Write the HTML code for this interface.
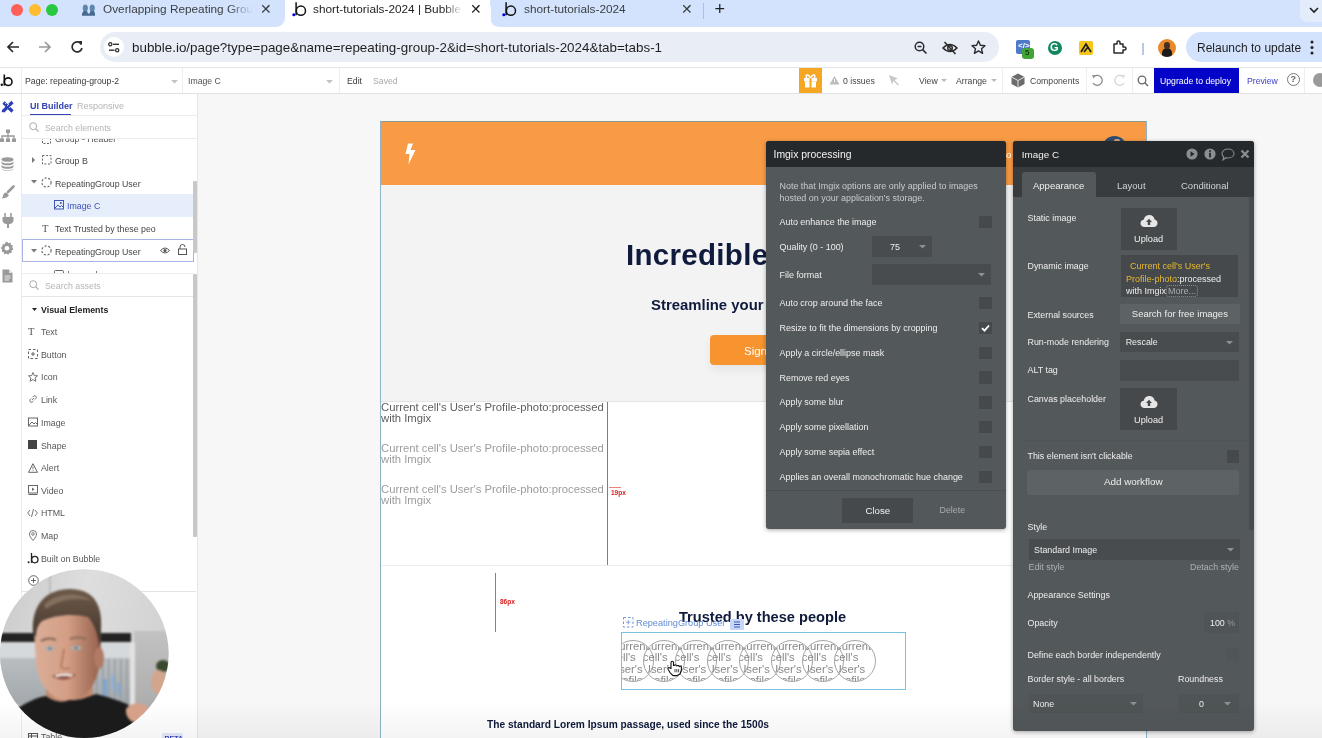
<!DOCTYPE html>
<html><head><meta charset="utf-8">
<style>
*{box-sizing:border-box;margin:0;padding:0}
html,body{width:1322px;height:738px;overflow:hidden;background:#f6f6f6;font-family:"Liberation Sans",sans-serif;position:relative;-webkit-font-smoothing:antialiased}
#root{position:absolute;left:0;top:0;width:1322px;height:738px;will-change:transform}
.a{position:absolute}
.t{position:absolute;white-space:nowrap;line-height:1}
svg{position:absolute;overflow:visible}
</style></head><body><div id="root">

<!-- ============ CHROME TAB BAR ============ -->
<div class="a" style="left:0;top:0;width:1322px;height:27px;background:#fff"></div>
<div class="a" style="left:274px;top:16px;width:227px;height:11px;background:#fff"></div><div class="a" style="left:0;top:0;width:285px;height:27px;background:#d3e3fd;border-radius:0 0 9px 0"></div><div class="a" style="left:490px;top:0;width:832px;height:27px;background:#d3e3fd;border-radius:0 0 0 9px"></div><div class="a" style="left:284.5px;top:0;width:206px;height:28px;background:#fff;border-radius:9px 9px 0 0"></div>
<div class="a" style="left:11px;top:4px;width:12px;height:12px;border-radius:50%;background:#ff5f57"></div>
<div class="a" style="left:29px;top:4px;width:12px;height:12px;border-radius:50%;background:#febc2e"></div>
<div class="a" style="left:46px;top:4px;width:12px;height:12px;border-radius:50%;background:#28c840"></div>
<svg style="left:82px;top:4px" width="14" height="12"><ellipse cx="3.3" cy="4" rx="2.6" ry="3.6" fill="#5f87ad"/><ellipse cx="10.2" cy="4" rx="2.6" ry="3.6" fill="#5f87ad"/><path d="M1.5 7 L5 7 L6 9.5 L7.5 9.5 L8.5 7 L12 7 L13 9.5 V11.8 H0 V9.5 Z" fill="#466a90"/></svg>
<div class="t" style="left:103px;top:3.5px;width:150px;overflow:hidden;font-size:11.8px;color:#3c4043;-webkit-mask-image:linear-gradient(to right,#000 125px,transparent 150px)">Overlapping Repeating Group</div>
<div class="t" style="left:260px;top:2px;font-size:14px;color:#3c4043">&#x2715;</div>
<!-- active tab -->

<svg style="left:292.8px;top:0px" width="14" height="18"><path d="M3.1 2.3 V15.3" stroke="#111" stroke-width="1.5"/><circle cx="7.9" cy="10.7" r="4.6" stroke="#111" stroke-width="1.5" fill="none"/><circle cx="0.8" cy="14.8" r="1.5" fill="#0000e0"/></svg>
<div class="t" style="left:313px;top:3.5px;width:150px;overflow:hidden;font-size:11.8px;color:#1f1f1f;-webkit-mask-image:linear-gradient(to right,#000 130px,transparent 150px)">short-tutorials-2024 | Bubble</div>
<div class="t" style="left:470px;top:2px;font-size:14px;color:#1f1f1f">&#x2715;</div>
<!-- third tab -->
<svg style="left:503px;top:0px" width="14" height="18"><path d="M3.1 2.3 V15.3" stroke="#111" stroke-width="1.5"/><circle cx="7.9" cy="10.7" r="4.6" stroke="#111" stroke-width="1.5" fill="none"/><circle cx="0.8" cy="14.8" r="1.5" fill="#0000e0"/></svg>
<div class="t" style="left:524px;top:3.5px;font-size:11.8px;color:#3c4043">short-tutorials-2024</div>
<div class="t" style="left:681px;top:2px;font-size:14px;color:#3c4043">&#x2715;</div>
<div class="a" style="left:703px;top:3px;width:1px;height:16px;background:#a8c0e8"></div>
<div class="t" style="left:714.5px;top:0px;font-size:18px;color:#1f1f1f">+</div>
<div class="a" style="left:1300px;top:0;width:22px;height:22px;background:#e3ecfb;border-radius:0 0 0 7px"></div>
<svg style="left:1309px;top:7px" width="10" height="6"><path d="M1 1 L5 5 L9 1" stroke="#1f1f1f" stroke-width="1.6" fill="none"/></svg>

<!-- ============ ADDRESS ROW ============ -->
<div class="a" style="left:0;top:27px;width:1322px;height:41px;background:#fff"></div>
<svg style="left:6px;top:40px" width="14" height="14"><path d="M13 7 H2 M7 2 L2 7 L7 12" stroke="#2b2b2b" stroke-width="1.7" fill="none"/></svg>
<svg style="left:38px;top:40px" width="14" height="14"><path d="M1 7 H12 M7 2 L12 7 L7 12" stroke="#9a9a9a" stroke-width="1.7" fill="none"/></svg>
<svg style="left:70px;top:40px" width="14" height="14"><path d="M11.5 4.5 A5 5 0 1 0 12 8" stroke="#2b2b2b" stroke-width="1.7" fill="none"/><path d="M8.5 1 L12 1 L12 4.6 Z" fill="#2b2b2b"/></svg>
<div class="a" style="left:100px;top:32px;width:899px;height:30px;border-radius:15px;background:#e9edf6"></div>
<div class="a" style="left:104px;top:37px;width:20px;height:20px;border-radius:50%;background:#fff"></div>
<svg style="left:108px;top:42px" width="12" height="11"><circle cx="2.3" cy="2.3" r="1.6" stroke="#333" stroke-width="1.3" fill="none"/><path d="M5 2.3 H11" stroke="#333" stroke-width="1.4"/><circle cx="9.2" cy="8.2" r="1.6" stroke="#333" stroke-width="1.3" fill="none"/><path d="M1 8.2 H6.5" stroke="#333" stroke-width="1.4"/></svg>
<div class="t" style="left:132px;top:40.7px;font-size:13.4px;color:#1f1f1f">bubble.io/page?type=page&amp;name=repeating-group-2&amp;id=short-tutorials-2024&amp;tab=tabs-1</div>
<svg style="left:914px;top:41px" width="14" height="14"><circle cx="5.5" cy="5.5" r="4.3" stroke="#2b2b2b" stroke-width="1.5" fill="none"/><path d="M3.5 5.5 H7.5 M8.6 8.6 L12.5 12.5" stroke="#2b2b2b" stroke-width="1.6"/></svg>
<svg style="left:942px;top:41px" width="16" height="14"><path d="M1 7 Q8 0 15 7 Q8 14 1 7 Z" stroke="#2b2b2b" stroke-width="1.5" fill="none"/><circle cx="8" cy="7" r="2.3" stroke="#2b2b2b" stroke-width="1.4" fill="none"/><path d="M2.5 1 L13.5 13" stroke="#2b2b2b" stroke-width="1.6"/></svg>
<svg style="left:971px;top:40px" width="15" height="15"><path d="M7.5 1 L9.4 5.3 L14 5.7 L10.5 8.7 L11.6 13.3 L7.5 10.9 L3.4 13.3 L4.5 8.7 L1 5.7 L5.6 5.3 Z" stroke="#2b2b2b" stroke-width="1.4" fill="none" stroke-linejoin="round"/></svg>
<!-- extensions -->
<div class="a" style="left:1016px;top:40px;width:14px;height:14px;background:#4d79c7;border-radius:2px"></div>
<div class="t" style="left:1018px;top:42px;font-size:8px;color:#fff;font-weight:700">&lt;/&gt;</div>
<div class="a" style="left:1022px;top:48px;width:12px;height:11px;background:#3fa535;border-radius:3px"></div>
<div class="t" style="left:1025px;top:49px;font-size:8px;color:#111">5</div>
<div class="a" style="left:1048px;top:41px;width:14px;height:14px;border-radius:50%;background:#12875e"></div>
<div class="t" style="left:1050px;top:42px;font-size:11px;color:#fff;font-weight:700">G</div>
<div class="a" style="left:1079px;top:41px;width:14px;height:14px;background:#f5c518;border-radius:2px"></div>
<svg style="left:1080px;top:43px" width="12" height="10"><path d="M1 9 L6 1 L11 9 M4 9 L8 4" stroke="#1a1a1a" stroke-width="1.6" fill="none"/></svg>
<svg style="left:1111px;top:40px" width="16" height="16"><path d="M3 4 H6 V2.5 A1.5 1.5 0 0 1 9 2.5 V4 H12 V7 H13.5 A1.5 1.5 0 0 1 13.5 10 H12 V13 H3 Z" stroke="#2b2b2b" stroke-width="1.5" fill="none" stroke-linejoin="round"/></svg>
<div class="a" style="left:1142px;top:43px;width:1.5px;height:12px;background:#b8c8e8"></div>
<div class="a" style="left:1158px;top:39px;width:18px;height:18px;border-radius:50%;background:#e88a2c;overflow:hidden"><div class="a" style="left:4px;top:9px;width:10px;height:10px;border-radius:5px 5px 0 0;background:#1a1a1a"></div><div class="a" style="left:6px;top:3px;width:6px;height:7px;border-radius:3px;background:#4a3020"></div></div>
<div class="a" style="left:1186px;top:32px;width:150px;height:30px;border-radius:15px;background:#d3e3fd"></div>
<div class="t" style="left:1197px;top:41.5px;font-size:12px;color:#1f1f1f">Relaunch to update</div>
<svg style="left:1310px;top:40px" width="4" height="15"><circle cx="2" cy="2" r="1.5" fill="#1f1f1f"/><circle cx="2" cy="7.5" r="1.5" fill="#1f1f1f"/><circle cx="2" cy="13" r="1.5" fill="#1f1f1f"/></svg>

<!-- ============ BUBBLE TOOLBAR ============ -->
<div class="a" style="left:0;top:67px;width:1322px;height:27px;background:#fff;border-top:1px solid #e6e6e6;border-bottom:1px solid #e2e2e2"></div>
<svg style="left:0px;top:72px" width="14" height="16"><path d="M4.3 2.5 V13.6" stroke="#111" stroke-width="1.6"/><circle cx="8.2" cy="9.7" r="3.8" stroke="#111" stroke-width="1.6" fill="none"/><circle cx="1.8" cy="12.7" r="1.2" fill="#111"/></svg>
<div class="a" style="left:21px;top:68px;width:1px;height:25px;background:#eee"></div>
<div class="t" style="left:25px;top:77px;font-size:8.7px;color:#3b3b3b">Page: repeating-group-2</div>
<svg style="left:170.5px;top:80px" width="7" height="4"><path d="M0 0 H7 L3.5 3.5 Z" fill="#c2c2c2"/></svg>
<div class="a" style="left:182px;top:68px;width:1px;height:25px;background:#eee"></div>
<div class="t" style="left:188px;top:77px;font-size:8.7px;color:#555">Image C</div>
<svg style="left:325.5px;top:80px" width="7" height="4"><path d="M0 0 H7 L3.5 3.5 Z" fill="#c2c2c2"/></svg>
<div class="a" style="left:339px;top:68px;width:1px;height:25px;background:#eee"></div>
<div class="t" style="left:347px;top:77px;font-size:8.7px;color:#3b3b3b">Edit</div>
<div class="t" style="left:373px;top:77px;font-size:8.7px;color:#a8a8a8">Saved</div>
<!-- right toolbar -->
<div class="a" style="left:799px;top:68px;width:23px;height:25px;background:#f5a623"></div>
<svg style="left:803px;top:73px" width="15" height="15"><rect x="1" y="5" width="13" height="3.5" fill="#fff"/><rect x="2" y="8.5" width="11" height="6" fill="#fff"/><rect x="6.5" y="5" width="2" height="10" fill="#f5a623"/><path d="M7.5 5 C5 0 1.5 2 4 5 M7.5 5 C10 0 13.5 2 11 5" stroke="#fff" stroke-width="1.5" fill="none"/></svg>
<svg style="left:829px;top:75px" width="11" height="10"><path d="M5.5 1 L10.5 9.5 H0.5 Z" fill="#bbb"/><rect x="5" y="4" width="1" height="3" fill="#fff"/></svg>
<div class="t" style="left:843px;top:77px;font-size:8.7px;color:#444">0 issues</div>
<svg style="left:888px;top:74px" width="12" height="12"><path d="M1 1 L10 4.5 L6.5 6 L11 10.5 L10 11.5 L5.5 7 L4 10.5 Z" fill="#c8c8c8"/></svg>
<div class="t" style="left:919px;top:77px;font-size:8.7px;color:#444">View</div>
<svg style="left:941px;top:79px" width="6" height="3"><path d="M0 0 H6 L3 3 Z" fill="#bbb"/></svg>
<div class="t" style="left:956px;top:77px;font-size:8.7px;color:#444">Arrange</div>
<svg style="left:991px;top:79px" width="6" height="3"><path d="M0 0 H6 L3 3 Z" fill="#bbb"/></svg>
<div class="a" style="left:1002px;top:68px;width:1px;height:25px;background:#eee"></div>
<svg style="left:1011px;top:73px" width="14" height="15"><path d="M7 0.5 L13.5 4 V11 L7 14.5 L0.5 11 V4 Z" fill="#6b6b6b"/><path d="M0.5 4 L7 7.5 L13.5 4 M7 7.5 V14.5" stroke="#fff" stroke-width="0.8" fill="none"/></svg>
<div class="t" style="left:1030px;top:77px;font-size:8.7px;color:#444">Components</div>
<div class="a" style="left:1086px;top:68px;width:1px;height:25px;background:#eee"></div>
<svg style="left:1091px;top:74px" width="12" height="12"><path d="M3 2.5 A5 5 0 1 1 2 9" stroke="#888" stroke-width="1.3" fill="none"/><path d="M1 1 L4.5 1.5 L2.5 4.5 Z" fill="#888"/></svg>
<svg style="left:1114px;top:74px" width="12" height="12"><path d="M9 2.5 A5 5 0 1 0 10 9" stroke="#d5d5d5" stroke-width="1.3" fill="none"/><path d="M11 1 L7.5 1.5 L9.5 4.5 Z" fill="#d5d5d5"/></svg>
<div class="a" style="left:1132px;top:68px;width:1px;height:25px;background:#eee"></div>
<svg style="left:1137px;top:75px" width="12" height="12"><circle cx="5" cy="5" r="3.8" stroke="#666" stroke-width="1.3" fill="none"/><path d="M7.8 7.8 L11 11" stroke="#666" stroke-width="1.4"/></svg>
<div class="a" style="left:1154px;top:68px;width:85px;height:25px;background:#0404c8"></div>
<div class="t" style="left:1160px;top:77px;font-size:8.7px;color:#fff">Upgrade to deploy</div>
<div class="t" style="left:1247px;top:77px;font-size:8.7px;color:#3b3bd0">Preview</div>
<div class="a" style="left:1287px;top:73px;width:13px;height:13px;border-radius:50%;border:1.2px solid #777"></div>
<div class="t" style="left:1290.5px;top:75px;font-size:9px;color:#666;font-weight:700">?</div>
<div class="a" style="left:1304px;top:68px;width:1px;height:25px;background:#eee"></div>
<div class="a" style="left:1313px;top:73px;width:14px;height:14px;border-radius:50%;background:#9a9a9a"></div>



<!-- ============ CANVAS ============ -->
<div class="a" style="left:198px;top:94px;width:1124px;height:644px;background:#f7f7f7"></div>
<div class="a" style="left:380px;top:121px;width:767px;height:617px;background:#fff;border:1px solid #8eb3c9;border-bottom:none"></div>
<div class="a" style="left:381px;top:121px;width:765px;height:64px;background:#f99b45;border-top:1px solid #8f9a8f"></div>
<svg style="left:403px;top:143px" width="13" height="22"><path d="M5 0.5 L10 0.5 L7.5 7 L12.5 7 L5.5 21.5 L6.5 11 L2.5 11 Z" fill="#fff"/></svg>
<div class="a" style="left:1102px;top:136px;width:25px;height:25px;border-radius:50%;background:#2f4d70"></div>
<div class="a" style="left:1114px;top:139px;width:6px;height:4px;border-radius:3px;background:#d9a38a"></div>
<div class="a" style="left:381px;top:185px;width:765px;height:216px;background:#f3f3f4"></div>
<div class="t" style="left:626px;top:240px;font-size:29.5px;font-weight:700;color:#0f1a3c;letter-spacing:0.3px">Incredible</div>
<div class="t" style="left:651px;top:297.5px;font-size:14.9px;font-weight:700;color:#0f1a3c">Streamline your</div>
<div class="a" style="left:710px;top:335px;width:80px;height:30px;background:#f7942f;border-radius:4px;box-shadow:0 5px 10px rgba(0,0,0,0.06)"></div>
<div class="t" style="left:744px;top:345.5px;font-size:11.5px;color:#fff">Sign</div>
<div class="a" style="left:381px;top:401px;width:765px;height:1px;background:#e4e4e4"></div>
<div class="a" style="left:381px;top:565px;width:765px;height:1px;background:#ececec"></div>
<!-- repeating group list -->
<div class="a" style="left:381px;top:402px;width:227px;height:163px;border-right:1.5px solid #a0765a"></div>
<div class="t" style="left:381px;top:402px;font-size:11.3px;line-height:11px;color:#5e5e5e;white-space:normal;width:230px">Current cell's User's Profile-photo:processed<br>with Imgix</div>
<div class="t" style="left:381px;top:443px;font-size:11.3px;line-height:11px;color:#9d9d9d;white-space:normal;width:230px">Current cell's User's Profile-photo:processed<br>with Imgix</div>
<div class="t" style="left:381px;top:484px;font-size:11.3px;line-height:11px;color:#9d9d9d;white-space:normal;width:230px">Current cell's User's Profile-photo:processed<br>with Imgix</div>
<div class="a" style="left:609px;top:487px;width:12px;height:1px;background:#f08080"></div>
<div class="t" style="left:611px;top:490px;font-size:6.5px;font-weight:700;color:#d81b1b">19px</div>
<div class="a" style="left:495px;top:573px;width:1px;height:59px;background:#f05555"></div>
<div class="t" style="left:500px;top:598.5px;font-size:6.5px;font-weight:700;color:#d81b1b">86px</div>
<!-- trusted section -->
<div class="t" style="left:679px;top:610px;font-size:14.6px;font-weight:700;color:#0f1a3c">Trusted by these people</div>
<svg style="left:623px;top:617px" width="11" height="11"><rect x="0.5" y="0.5" width="9.5" height="9.5" stroke="#6e95d8" stroke-width="1" stroke-dasharray="2.5 2" fill="none"/><path d="M5.25 3 V7.5 M3 5.25 H7.5" stroke="#6e95d8" stroke-width="0.8"/></svg>
<div class="t" style="left:636px;top:619px;font-size:9.2px;color:#4d7ed0;opacity:0.9">RepeatingGroup User</div>
<div class="a" style="left:730px;top:619px;width:14px;height:11px;background:#c6d8f6"></div>
<svg style="left:734px;top:621px" width="6" height="7"><path d="M0 1 H6 M0 3.5 H6 M0 6 H6" stroke="#3a55c0" stroke-width="1"/></svg>
<div class="a" style="left:621px;top:632px;width:285px;height:58px;border:1px solid #7cc0e4"></div>
<div class="a" style="left:622px;top:633px;width:283px;height:56px;overflow:hidden"><div class="a" style="left:-622px;top:-633px;width:1322px;height:738px"><div class="a" style="left:611.5px;top:640px;width:42px;height:42px;border-radius:50%;border:1px solid #a6a6a6;overflow:hidden"><div class="t" style="left:-1.5px;top:0px;width:46px;white-space:normal;font-size:11.3px;line-height:11.3px;color:#888">Current cell's User's Profile-photo</div></div>
<div class="a" style="left:643.3px;top:640px;width:42px;height:42px;border-radius:50%;border:1px solid #a6a6a6;overflow:hidden"><div class="t" style="left:-1.5px;top:0px;width:46px;white-space:normal;font-size:11.3px;line-height:11.3px;color:#888">Current cell's User's Profile-photo</div></div>
<div class="a" style="left:675.1px;top:640px;width:42px;height:42px;border-radius:50%;border:1px solid #a6a6a6;overflow:hidden"><div class="t" style="left:-1.5px;top:0px;width:46px;white-space:normal;font-size:11.3px;line-height:11.3px;color:#888">Current cell's User's Profile-photo</div></div>
<div class="a" style="left:706.9px;top:640px;width:42px;height:42px;border-radius:50%;border:1px solid #a6a6a6;overflow:hidden"><div class="t" style="left:-1.5px;top:0px;width:46px;white-space:normal;font-size:11.3px;line-height:11.3px;color:#888">Current cell's User's Profile-photo</div></div>
<div class="a" style="left:738.7px;top:640px;width:42px;height:42px;border-radius:50%;border:1px solid #a6a6a6;overflow:hidden"><div class="t" style="left:-1.5px;top:0px;width:46px;white-space:normal;font-size:11.3px;line-height:11.3px;color:#888">Current cell's User's Profile-photo</div></div>
<div class="a" style="left:770.5px;top:640px;width:42px;height:42px;border-radius:50%;border:1px solid #a6a6a6;overflow:hidden"><div class="t" style="left:-1.5px;top:0px;width:46px;white-space:normal;font-size:11.3px;line-height:11.3px;color:#888">Current cell's User's Profile-photo</div></div>
<div class="a" style="left:802.3px;top:640px;width:42px;height:42px;border-radius:50%;border:1px solid #a6a6a6;overflow:hidden"><div class="t" style="left:-1.5px;top:0px;width:46px;white-space:normal;font-size:11.3px;line-height:11.3px;color:#888">Current cell's User's Profile-photo</div></div>
<div class="a" style="left:834.1px;top:640px;width:42px;height:42px;border-radius:50%;border:1px solid #a6a6a6;overflow:hidden"><div class="t" style="left:-1.5px;top:0px;width:46px;white-space:normal;font-size:11.3px;line-height:11.3px;color:#888">Current cell's User's Profile-photo</div></div>
</div></div>
<svg style="left:666px;top:660px" width="17" height="17"><path d="M6.2 1.3 C5.4 1.3 5 1.9 5 2.6 V8.6 L3.4 7.8 C2.5 7.4 1.5 8.2 2 9.2 L4.2 12.8 L7 15.6 H11.2 L14 14 L15.4 10 V7.2 C15.4 6.2 14 5.8 13.2 6.6 C13 5.5 11.5 5 10.8 6 C10.5 4.8 9 4.6 8.4 5.4 H7.5 V2.6 C7.5 1.9 7 1.3 6.2 1.3 Z" fill="#fff" stroke="#111" stroke-width="1.1" stroke-linejoin="round"/><path d="M9 9 V12.3 M10.8 9 V12.3 M12.6 9 V12.3" stroke="#222" stroke-width="0.8"/></svg>
<div class="t" style="left:487px;top:720px;font-size:10.2px;font-weight:700;color:#0f1a3c">The standard Lorem Ipsum passage, used since the 1500s</div>


<!-- ============ PANELS ============ -->
<div class="a" style="left:765.5px;top:140.5px;width:240.5px;height:388.5px;background:#53585a;border-radius:3px;box-shadow:0 1px 4px rgba(0,0,0,0.35)"></div>
<div class="a" style="left:765.5px;top:140.5px;width:240.5px;height:26.5px;background:#25292b;border-radius:3px 3px 0 0"></div>
<div class="t" style="left:773.5px;top:149.5px;font-size:10.4px;color:#f2f2f2;">Imgix processing</div>
<div class="t" style="left:779.5px;top:181.8px;font-size:8.95px;color:#c9cbcc;">Note that Imgix options are only applied to images</div>
<div class="t" style="left:779.5px;top:194.1px;font-size:8.95px;color:#c9cbcc;">hosted on your application's storage.</div>
<div class="t" style="left:779.5px;top:217.8px;font-size:8.95px;color:#eeeeee;">Auto enhance the image</div>
<div class="a" style="left:979px;top:215.5px;width:12.5px;height:12.5px;background:#46494b;"></div>
<div class="t" style="left:779.5px;top:242.5px;font-size:8.95px;color:#eeeeee;">Quality (0 - 100)</div>
<div class="t" style="left:779.5px;top:270.7px;font-size:8.95px;color:#eeeeee;">File format</div>
<div class="t" style="left:779.5px;top:298.9px;font-size:8.95px;color:#eeeeee;">Auto crop around the face</div>
<div class="a" style="left:979px;top:296.6px;width:12.5px;height:12.5px;background:#46494b;"></div>
<div class="t" style="left:779.5px;top:324.1px;font-size:8.95px;color:#eeeeee;">Resize to fit the dimensions by cropping</div>
<div class="a" style="left:979px;top:321.8px;width:12.5px;height:12.5px;background:#46494b;"></div>
<svg style="left:981px;top:323.8px" width="9" height="8"><path d="M1 4.2 L3.5 6.7 L8 1.5" stroke="#fff" stroke-width="1.8" fill="none"/></svg>
<div class="t" style="left:779.5px;top:349.0px;font-size:8.95px;color:#eeeeee;">Apply a circle/ellipse mask</div>
<div class="a" style="left:979px;top:346.7px;width:12.5px;height:12.5px;background:#46494b;"></div>
<div class="t" style="left:779.5px;top:373.6px;font-size:8.95px;color:#eeeeee;">Remove red eyes</div>
<div class="a" style="left:979px;top:371.3px;width:12.5px;height:12.5px;background:#46494b;"></div>
<div class="t" style="left:779.5px;top:398.3px;font-size:8.95px;color:#eeeeee;">Apply some blur</div>
<div class="a" style="left:979px;top:396px;width:12.5px;height:12.5px;background:#46494b;"></div>
<div class="t" style="left:779.5px;top:423.2px;font-size:8.95px;color:#eeeeee;">Apply some pixellation</div>
<div class="a" style="left:979px;top:420.9px;width:12.5px;height:12.5px;background:#46494b;"></div>
<div class="t" style="left:779.5px;top:448.1px;font-size:8.95px;color:#eeeeee;">Apply some sepia effect</div>
<div class="a" style="left:979px;top:445.8px;width:12.5px;height:12.5px;background:#46494b;"></div>
<div class="t" style="left:779.5px;top:473.1px;font-size:8.95px;color:#eeeeee;">Applies an overall monochromatic hue change</div>
<div class="a" style="left:979px;top:470.8px;width:12.5px;height:12.5px;background:#46494b;"></div>
<div class="a" style="left:872.3px;top:236px;width:60.1px;height:20.5px;background:#484c4e;"></div>
<div class="t" style="left:890px;top:242.5px;font-size:8.95px;color:#eeeeee;">75</div>
<svg style="left:918.5px;top:244.7px" width="7" height="4"><path d="M0 0 H7 L3.5 3.5 Z" fill="#8d9193"/></svg>
<div class="a" style="left:872.3px;top:264px;width:118.7px;height:20.8px;background:#484c4e;"></div>
<svg style="left:977.5px;top:272.9px" width="7" height="4"><path d="M0 0 H7 L3.5 3.5 Z" fill="#8d9193"/></svg>
<div class="a" style="left:765.5px;top:490px;width:240.5px;height:1.0px;background:#4a4e50;"></div>
<div class="a" style="left:842px;top:498px;width:70.7px;height:24.6px;background:#46494b;"></div>
<div class="t" style="left:865.4px;top:505.9px;font-size:9.7px;color:#f2f2f2;">Close</div>
<div class="t" style="left:939.5px;top:506.3px;font-size:8.9px;color:#a9acae;">Delete</div>
<div class="a" style="left:1013px;top:140.5px;width:241.0px;height:590.2px;background:#53585a;border-radius:3px;box-shadow:0 1px 4px rgba(0,0,0,0.35)"></div>
<div class="a" style="left:1013px;top:140.5px;width:241.0px;height:26.8px;background:#25292b;border-radius:3px 3px 0 0"></div>
<div class="a" style="left:1013px;top:167.3px;width:241.0px;height:29.7px;background:#383c3e;"></div>
<div class="a" style="left:1021.7px;top:172.4px;width:74.0px;height:25.1px;background:#53585a;border-radius:3px 3px 0 0"></div>
<div class="t" style="left:1021.7px;top:149.5px;font-size:9.9px;color:#f2f2f2;">Image C</div>
<div class="t" style="left:1006px;top:150.0px;font-size:9.5px;color:#fff;">o</div>
<svg style="left:1186px;top:148px" width="12" height="12"><circle cx="6" cy="6" r="5.6" fill="#8a8e90"/><path d="M4.5 3.3 L8.6 6 L4.5 8.7 Z" fill="#25292b"/></svg>
<svg style="left:1203.5px;top:148px" width="12" height="12"><circle cx="6" cy="6" r="5.6" fill="#8a8e90"/><rect x="5.1" y="4.8" width="1.8" height="4.6" fill="#25292b"/><circle cx="6" cy="3.1" r="1" fill="#25292b"/></svg>
<svg style="left:1220.5px;top:148px" width="14" height="13"><path d="M7 1 C10.5 1 13 3 13 5.5 C13 8 10.5 10 7 10 C6.3 10 5.6 9.9 5 9.7 L2 11.8 L2.8 9 C1.6 8.2 1 7 1 5.5 C1 3 3.5 1 7 1 Z" stroke="#8a8e90" stroke-width="1.1" fill="none"/></svg>
<svg style="left:1240px;top:149px" width="10" height="10"><path d="M1.5 1.5 L8.5 8.5 M8.5 1.5 L1.5 8.5" stroke="#8a8e90" stroke-width="2.3"/></svg>
<div class="t" style="left:1033px;top:180.5px;font-size:9.5px;color:#f0f0f0;">Appearance</div>
<div class="t" style="left:1117px;top:180.5px;font-size:9.5px;color:#d0d2d3;">Layout</div>
<div class="t" style="left:1181px;top:180.5px;font-size:9.5px;color:#d0d2d3;">Conditional</div>
<div class="a" style="left:1249.3px;top:197px;width:4.7px;height:333.0px;background:#474b4d;"></div>
<div class="t" style="left:1027.5px;top:214.3px;font-size:8.9px;color:#eeeeee;">Static image</div>
<div class="t" style="left:1027.5px;top:261.8px;font-size:8.9px;color:#eeeeee;">Dynamic image</div>
<div class="t" style="left:1027.5px;top:310.6px;font-size:8.9px;color:#eeeeee;">External sources</div>
<div class="t" style="left:1027.5px;top:338.3px;font-size:8.9px;color:#eeeeee;">Run-mode rendering</div>
<div class="t" style="left:1027.5px;top:366.3px;font-size:8.9px;color:#eeeeee;">ALT tag</div>
<div class="t" style="left:1027.5px;top:394.8px;font-size:8.9px;color:#eeeeee;">Canvas placeholder</div>
<div class="t" style="left:1027.5px;top:452.0px;font-size:8.9px;color:#eeeeee;">This element isn't clickable</div>
<div class="t" style="left:1027.5px;top:523.3px;font-size:8.9px;color:#eeeeee;">Style</div>
<div class="t" style="left:1027.5px;top:591.3px;font-size:8.9px;color:#eeeeee;">Appearance Settings</div>
<div class="t" style="left:1027.5px;top:618.7px;font-size:8.9px;color:#eeeeee;">Opacity</div>
<div class="t" style="left:1027.5px;top:650.6px;font-size:8.9px;color:#eeeeee;">Define each border independently</div>
<div class="t" style="left:1027.5px;top:674.9px;font-size:8.9px;color:#eeeeee;">Border style - all borders</div>
<div class="a" style="left:1120.6px;top:207.6px;width:56.4px;height:42.4px;background:#46494b;"></div>
<svg style="left:1139.5px;top:214px" width="18" height="14"><path d="M4.5 13 C2 13 0.5 11.3 0.5 9.3 C0.5 7.4 1.9 6 3.7 5.8 C4.2 3 6.5 1 9.3 1 C12.1 1 14.3 3 14.6 5.6 C16.4 5.9 17.5 7.4 17.5 9.3 C17.5 11.3 16 13 13.8 13 Z" fill="#e6e6e6"/><path d="M9 4.8 L12 8 H10.2 V11 H7.8 V8 H6 Z" fill="#46494b"/></svg>
<div class="t" style="left:1134px;top:234.9px;font-size:9.2px;color:#f0f0f0;">Upload</div>
<div class="a" style="left:1120.6px;top:255px;width:117.9px;height:42.0px;background:#46494b;"></div>
<div class="t" style="left:1130px;top:261.8px;font-size:9.0px;color:#e6b830;">Current cell's User's</div>
<div class="t" style="left:1126px;top:274.6px;font-size:9.0px;color:#eeeeee;"><span style="color:#e6b830">Profile-photo</span>:processed</div>
<div class="t" style="left:1126px;top:286.8px;font-size:9.0px;color:#eeeeee;">with Imgix<span style="color:#a9acae;border:1px dotted #8a8e90;border-radius:3px;padding:0 1px">More...</span></div>
<div class="a" style="left:1120px;top:303.7px;width:120.0px;height:20.3px;background:#5d6264;border-radius:1px"></div>
<div class="t" style="left:1131.8px;top:309.1px;font-size:9.5px;color:#eeeeee;">Search for free images</div>
<div class="a" style="left:1120.3px;top:331.6px;width:118.6px;height:20.7px;background:#484c4e;"></div>
<div class="t" style="left:1125.7px;top:338.3px;font-size:8.9px;color:#eeeeee;">Rescale</div>
<svg style="left:1225.5px;top:340.5px" width="7" height="4"><path d="M0 0 H7 L3.5 3.5 Z" fill="#8d9193"/></svg>
<div class="a" style="left:1120.3px;top:360px;width:118.6px;height:20.7px;background:#484c4e;"></div>
<div class="a" style="left:1120.3px;top:388.3px;width:56.4px;height:41.7px;background:#46494b;"></div>
<svg style="left:1139.5px;top:395px" width="18" height="14"><path d="M4.5 13 C2 13 0.5 11.3 0.5 9.3 C0.5 7.4 1.9 6 3.7 5.8 C4.2 3 6.5 1 9.3 1 C12.1 1 14.3 3 14.6 5.6 C16.4 5.9 17.5 7.4 17.5 9.3 C17.5 11.3 16 13 13.8 13 Z" fill="#e6e6e6"/><path d="M9 4.8 L12 8 H10.2 V11 H7.8 V8 H6 Z" fill="#46494b"/></svg>
<div class="t" style="left:1134px;top:415.7px;font-size:9.2px;color:#f0f0f0;">Upload</div>
<div class="a" style="left:1021px;top:440px;width:228.0px;height:1.0px;background:#505457;"></div>
<div class="a" style="left:1227px;top:450px;width:12.0px;height:13.0px;background:#46494b;"></div>
<div class="a" style="left:1027px;top:470.2px;width:212.0px;height:24.6px;background:#5d6264;border-radius:2px"></div>
<div class="t" style="left:1103.9px;top:477.3px;font-size:9.9px;color:#eeeeee;">Add workflow</div>
<div class="a" style="left:1029px;top:539px;width:210.8px;height:21.0px;background:#484c4e;"></div>
<div class="t" style="left:1034px;top:545.8px;font-size:8.9px;color:#eeeeee;">Standard Image</div>
<svg style="left:1226.5px;top:548.0px" width="7" height="4"><path d="M0 0 H7 L3.5 3.5 Z" fill="#8d9193"/></svg>
<div class="t" style="left:1028.5px;top:562.8px;font-size:8.9px;color:#aeb1b2;">Edit style</div>
<div class="t" style="left:1190px;top:562.8px;font-size:8.9px;color:#aeb1b2;">Detach style</div>
<div class="a" style="left:1204px;top:612px;width:35.0px;height:21.0px;background:#4f5456;"></div>
<div class="t" style="left:1210px;top:618.7px;font-size:8.9px;color:#eeeeee;">100 <span style="color:#9a9d9f">%</span></div>
<div class="a" style="left:1226px;top:648px;width:13.0px;height:13.0px;background:#505557;"></div>
<div class="t" style="left:1178px;top:674.9px;font-size:8.9px;color:#eeeeee;">Roundness</div>
<div class="a" style="left:1029px;top:693.8px;width:114.0px;height:19.2px;background:#4f5456;"></div>
<div class="t" style="left:1033px;top:699.7px;font-size:8.9px;color:#eeeeee;">None</div>
<svg style="left:1129.5px;top:701.9px" width="7" height="4"><path d="M0 0 H7 L3.5 3.5 Z" fill="#8d9193"/></svg>
<div class="a" style="left:1178px;top:693.8px;width:61.0px;height:19.2px;background:#4f5456;"></div>
<div class="t" style="left:1199px;top:699.7px;font-size:8.9px;color:#eeeeee;">0</div>
<svg style="left:1223.5px;top:701.9px" width="7" height="4"><path d="M0 0 H7 L3.5 3.5 Z" fill="#8d9193"/></svg>

<!-- ============ LEFT ICON COLUMN ============ -->
<div class="a" style="left:0;top:94px;width:22px;height:644px;background:#fff;border-right:1px solid #ededed"></div>
<svg style="left:1px;top:100px" width="14" height="13"><path d="M2 11.5 L11.5 2" stroke="#2d3fb5" stroke-width="3.2"/><path d="M2.5 2.5 L11.5 11.5" stroke="#2d3fb5" stroke-width="3.2"/><path d="M4 4 L6 2 M6 6 L8 4 M8 8 L10 6" stroke="#fff" stroke-width="0.8"/><path d="M0.5 12.5 L1.5 9.5 L3.5 11.5 Z" fill="#2d3fb5"/></svg>
<svg style="left:-0.5px;top:129px" width="16" height="13"><rect x="6" y="0.5" width="4" height="3.5" fill="#9a9a9a"/><path d="M8 4 V7 M2 10 V7 H14 V10 M8 7 V10" stroke="#9a9a9a" stroke-width="1.3" fill="none"/><rect x="0" y="9.5" width="4" height="3.5" fill="#9a9a9a"/><rect x="6" y="9.5" width="4" height="3.5" fill="#9a9a9a"/><rect x="12" y="9.5" width="4" height="3.5" fill="#9a9a9a"/></svg>
<svg style="left:0.5px;top:157px" width="13" height="14"><ellipse cx="6.5" cy="2.5" rx="6" ry="2.3" fill="#9a9a9a"/><path d="M0.5 4 V6 A6 2.3 0 0 0 12.5 6 V4 A6 2.3 0 0 1 0.5 4 Z M0.5 7.5 V9.5 A6 2.3 0 0 0 12.5 9.5 V7.5 A6 2.3 0 0 1 0.5 7.5 Z M0.5 11 V11.5 A6 2.3 0 0 0 12.5 11.5 V11 A6 2.3 0 0 1 0.5 11 Z" fill="#9a9a9a"/></svg>
<svg style="left:1px;top:185px" width="14" height="14"><path d="M12.5 1.5 L7 7" stroke="#9a9a9a" stroke-width="2.6" stroke-linecap="round"/><path d="M5.5 7.5 C3 7.5 2 9.5 2 11 C2 12 1.2 12.8 0.5 13 C3.5 13.8 7.5 12.5 7.8 10 Z" fill="#9a9a9a"/></svg>
<svg style="left:1.5px;top:213px" width="12" height="15"><path d="M3 0 V4 M9 0 V4" stroke="#9a9a9a" stroke-width="1.6"/><path d="M0.5 4 H11.5 V7 C11.5 10 9 11 7 11 V15 H5 V11 C3 11 0.5 10 0.5 7 Z" fill="#9a9a9a"/></svg>
<svg style="left:-0.5px;top:241px" width="14" height="14"><path d="M7 0.5 L8.3 2.3 L10.5 1.6 L10.9 3.8 L13 4.5 L12.2 6.6 L13.5 8.3 L11.6 9.6 L11.6 11.9 L9.4 11.9 L8.2 13.8 L6.4 12.5 L4.4 13.4 L3.8 11.2 L1.6 10.6 L2.2 8.5 L0.6 6.9 L2.4 5.6 L2.3 3.4 L4.5 3.2 L5.6 1.2 Z" fill="#9a9a9a"/><circle cx="7" cy="7.2" r="2.3" fill="#fff"/></svg>
<svg style="left:1.5px;top:269px" width="11" height="14"><path d="M0.5 0.5 H7 L10.5 4 V13.5 H0.5 Z" fill="#9a9a9a"/><path d="M7 0.5 V4 H10.5" fill="#ddd"/><path d="M2.5 7 H8.5 M2.5 9 H8.5 M2.5 11 H7" stroke="#fff" stroke-width="0.8"/></svg>

<!-- ============ LEFT PANEL ============ -->
<div class="a" style="left:22px;top:94px;width:176px;height:644px;background:#fff;border-right:1px solid #e6e6e6"></div>
<div class="t" style="left:30px;top:101.5px;font-size:9px;font-weight:700;color:#3444b4">UI Builder</div>
<div class="a" style="left:30px;top:114px;width:41px;height:2px;background:#3444b4"></div>
<div class="t" style="left:77px;top:101.5px;font-size:9px;color:#b4b4b4">Responsive</div>
<div class="a" style="left:22px;top:115px;width:175px;height:1px;background:#ececec"></div>
<svg style="left:29px;top:122px" width="10" height="10"><circle cx="4.2" cy="4.2" r="3.5" stroke="#aaa" stroke-width="1" fill="none"/><path d="M6.8 6.8 L9.5 9.5" stroke="#aaa" stroke-width="1.1"/></svg>
<div class="t" style="left:45px;top:123.5px;font-size:8.8px;color:#b5b5b5">Search elements</div>
<div class="a" style="left:22px;top:138px;width:175px;height:1px;background:#ececec"></div>
<!-- tree -->
<div class="a" style="left:22px;top:139px;width:172px;height:124px;overflow:hidden">
  <div class="t" style="left:33px;top:-4.5px;font-size:8.8px;color:#555">Group - Header</div>
  <svg style="left:20px;top:-4px" width="10" height="10"><rect x="0.5" y="0.5" width="8" height="8" stroke="#666" stroke-dasharray="2 1.5" fill="none"/></svg>
</div>
<svg style="left:32px;top:157px" width="4" height="6"><path d="M0 0 L3 3 L0 6 Z" fill="#777"/></svg>
<svg style="left:42px;top:155px" width="10" height="10"><rect x="0.5" y="0.5" width="8.5" height="8.5" stroke="#666" stroke-width="1" stroke-dasharray="2 1.6" fill="none"/></svg>
<div class="t" style="left:55px;top:156.5px;font-size:8.8px;color:#444">Group B</div>
<svg style="left:31px;top:180px" width="6" height="4"><path d="M0 0 H6 L3 3.5 Z" fill="#777"/></svg>
<svg style="left:41px;top:177px" width="11" height="11"><circle cx="5.5" cy="5.5" r="4.6" stroke="#666" stroke-width="1.1" stroke-dasharray="2.2 1.6" fill="none"/></svg>
<div class="t" style="left:55px;top:179.5px;font-size:8.8px;color:#444">RepeatingGroup User</div>
<div class="a" style="left:22px;top:194px;width:172px;height:23px;background:#e7eefb"></div>
<svg style="left:54px;top:200px" width="10" height="10"><rect x="0.5" y="0.5" width="9" height="8.5" stroke="#4154b8" stroke-width="1" fill="none"/><path d="M1 8 L4 5 L6 7 L7.5 5.5 L9.5 7.5" stroke="#4154b8" stroke-width="1" fill="none"/><circle cx="6.8" cy="3" r="1" fill="#4154b8"/></svg>
<div class="t" style="left:67px;top:201.5px;font-size:8.8px;color:#3c50bd">Image C</div>
<div class="t" style="left:42px;top:223.5px;font-size:10.5px;color:#555;font-family:'Liberation Serif'">T</div>
<div class="t" style="left:55px;top:224.5px;font-size:8.8px;color:#444">Text Trusted by these peo</div>
<div class="a" style="left:22px;top:239px;width:172px;height:23px;border:1px solid #a9b4e6;background:#fff"></div>
<svg style="left:31px;top:249px" width="6" height="4"><path d="M0 0 H6 L3 3.5 Z" fill="#777"/></svg>
<svg style="left:41px;top:245px" width="11" height="11"><circle cx="5.5" cy="5.5" r="4.6" stroke="#666" stroke-width="1.1" stroke-dasharray="2.2 1.6" fill="none"/></svg>
<div class="t" style="left:55px;top:247.5px;font-size:8.8px;color:#444">RepeatingGroup User</div>
<svg style="left:160px;top:247px" width="10" height="7"><path d="M0.5 3.5 Q5 -1.5 9.5 3.5 Q5 8.5 0.5 3.5 Z" stroke="#555" stroke-width="1" fill="none"/><circle cx="5" cy="3.5" r="1.6" fill="#555"/></svg>
<svg style="left:178px;top:244px" width="9" height="11"><path d="M2 5 V3 A2.5 2.5 0 0 1 7 3" stroke="#555" stroke-width="1" fill="none"/><rect x="0.5" y="5" width="8" height="5.5" stroke="#555" stroke-width="1" fill="none"/></svg>
<svg style="left:54px;top:269.5px" width="10" height="4"><path d="M0.5 3.5 V1.5 Q0.5 0.5 1.5 0.5 H8.5 Q9.5 0.5 9.5 1.5 V3.5" stroke="#666" stroke-width="1" fill="none"/></svg><div class="a" style="left:68px;top:271px;width:1.2px;height:2px;background:#777"></div><div class="a" style="left:96px;top:271px;width:1.2px;height:2px;background:#777"></div>
<div class="a" style="left:193px;top:181px;width:4px;height:72px;background:#c8c8c8;border-radius:1px"></div>
<!-- search assets -->
<div class="a" style="left:22px;top:273px;width:172px;height:24px;background:#fff;border-top:1px solid #ececec;border-bottom:1px solid #e6e6e6"></div>
<svg style="left:29px;top:280px" width="10" height="10"><circle cx="4.2" cy="4.2" r="3.5" stroke="#aaa" stroke-width="1" fill="none"/><path d="M6.8 6.8 L9.5 9.5" stroke="#aaa" stroke-width="1.1"/></svg>
<div class="t" style="left:45px;top:281.5px;font-size:8.8px;color:#b5b5b5">Search assets</div>
<div class="a" style="left:193px;top:274px;width:4px;height:263px;background:#c8c8c8;border-radius:1px"></div>
<svg style="left:31.5px;top:307.5px" width="5" height="4"><path d="M0 0 H5 L2.5 3 Z" fill="#222"/></svg>
<div class="t" style="left:41px;top:305.5px;font-size:8.8px;font-weight:700;color:#222">Visual Elements</div>
<div class="t" style="left:28px;top:326.5px;font-size:10.5px;color:#555;font-family:'Liberation Serif'">T</div>
<div class="t" style="left:41px;top:328.0px;font-size:8.8px;color:#555">Text</div>
<svg style="left:28px;top:349px" width="10" height="10"><rect x="0.5" y="0.5" width="9" height="9" stroke="#666" stroke-width="1" stroke-dasharray="2.5 2" fill="none"/><path d="M5 3 V7 M3 5 H7" stroke="#666" stroke-width="1"/></svg>
<div class="t" style="left:41px;top:350.5px;font-size:8.8px;color:#555">Button</div>
<svg style="left:28px;top:371.7px" width="10" height="10"><path d="M5 0.5 L6.3 3.6 L9.6 3.8 L7.1 5.9 L7.9 9.3 L5 7.5 L2.1 9.3 L2.9 5.9 L0.4 3.8 L3.7 3.6 Z" stroke="#666" stroke-width="0.9" fill="none" stroke-linejoin="round"/></svg>
<div class="t" style="left:41px;top:373.2px;font-size:8.8px;color:#555">Icon</div>
<svg style="left:28px;top:394px" width="10" height="10"><path d="M4 6 L6 4 M3.2 4.5 L1.8 5.9 A1.8 1.8 0 0 0 4.1 8.2 L5.5 6.8 M4.5 3.2 L5.9 1.8 A1.8 1.8 0 0 1 8.2 4.1 L6.8 5.5" stroke="#777" stroke-width="1" fill="none"/></svg>
<div class="t" style="left:41px;top:395.5px;font-size:8.8px;color:#555">Link</div>
<svg style="left:28px;top:417px" width="10" height="10"><rect x="0.5" y="1" width="9" height="8" stroke="#666" stroke-width="1" fill="none"/><path d="M1 8 L4 5 L6 7 L7.5 5.5 L9.5 7.5" stroke="#666" stroke-width="1" fill="none"/></svg>
<div class="t" style="left:41px;top:418.5px;font-size:8.8px;color:#555">Image</div>
<div class="a" style="left:28px;top:440px;width:9px;height:9px;background:#444"></div>
<div class="t" style="left:41px;top:441.5px;font-size:8.8px;color:#555">Shape</div>
<svg style="left:28px;top:462.5px" width="10" height="10"><path d="M5 0.7 L9.5 9.3 H0.5 Z" stroke="#666" stroke-width="1" fill="none" stroke-linejoin="round"/><path d="M5 3.5 V6.3 M5 7.3 V8" stroke="#666" stroke-width="0.9"/></svg>
<div class="t" style="left:41px;top:464.0px;font-size:8.8px;color:#555">Alert</div>
<svg style="left:28px;top:485px" width="10" height="10"><rect x="0.5" y="0.5" width="9" height="7.5" stroke="#666" stroke-width="1" fill="none"/><path d="M4 2.5 L6.5 4.2 L4 6 Z" fill="#666"/><path d="M0.5 9.5 H9.5" stroke="#666"/></svg>
<div class="t" style="left:41px;top:486.5px;font-size:8.8px;color:#555">Video</div>
<svg style="left:27px;top:507.5px" width="11" height="10"><path d="M3 2 L0.7 5 L3 8 M8 2 L10.3 5 L8 8 M6.5 1 L4.5 9" stroke="#666" stroke-width="0.9" fill="none"/></svg>
<div class="t" style="left:41px;top:509.0px;font-size:8.8px;color:#555">HTML</div>
<svg style="left:29px;top:530px" width="8" height="11"><path d="M4 10.5 C1 7 0.5 5.5 0.5 4 A3.5 3.5 0 0 1 7.5 4 C7.5 5.5 7 7 4 10.5 Z" stroke="#666" stroke-width="0.9" fill="none"/><circle cx="4" cy="4" r="1.3" stroke="#666" stroke-width="0.8" fill="none"/></svg>
<div class="t" style="left:41px;top:531.5px;font-size:8.8px;color:#555">Map</div>
<svg style="left:27px;top:552px" width="12" height="12"><path d="M4.5 1 V10.8" stroke="#222" stroke-width="1.3"/><circle cx="7.8" cy="7.6" r="3.2" stroke="#222" stroke-width="1.3" fill="none"/><circle cx="1.6" cy="10.2" r="1" fill="#222"/></svg>
<div class="t" style="left:41px;top:554.5px;font-size:8.8px;color:#555">Built on Bubble</div>
<svg style="left:28px;top:575px" width="11" height="11"><circle cx="5.5" cy="5.5" r="4.8" stroke="#555" stroke-width="0.9" fill="none"/><path d="M5.5 3 V8 M3 5.5 H8" stroke="#555" stroke-width="0.9"/></svg>
<div class="a" style="left:22px;top:591px;width:174px;height:1px;background:#e4e4e4"></div>
<div class="a" style="left:162px;top:733px;width:21px;height:9px;background:#e3e8fb;border-radius:2px"></div><div class="t" style="left:164.5px;top:735px;font-size:7px;font-weight:700;color:#3545b5">BETA</div><svg style="left:28px;top:733px" width="10" height="6"><rect x="0.5" y="0.5" width="9" height="8" stroke="#555" fill="none"/><path d="M0.5 3 H9.5 M3.5 0.5 V8" stroke="#555"/></svg><div class="t" style="left:41px;top:733px;font-size:8.8px;color:#555">Table</div>


<div class="a" style="left:0;top:700px;width:1322px;height:38px;background:linear-gradient(to bottom,rgba(0,0,0,0),rgba(0,0,0,0.045))"></div>
<!-- ============ WEBCAM ============ -->
<svg style="left:0;top:569px" width="170" height="170" viewBox="0 0 170 170">
<defs>
<clipPath id="cc"><circle cx="84.3" cy="84.6" r="84.4"/></clipPath>
<linearGradient id="wall" x1="0" y1="0" x2="1" y2="0.3"><stop offset="0" stop-color="#c9c9c9"/><stop offset="0.5" stop-color="#dedede"/><stop offset="1" stop-color="#d2d2d2"/></linearGradient>
<linearGradient id="face" x1="0" y1="0" x2="1" y2="0"><stop offset="0" stop-color="#dcae98"/><stop offset="0.5" stop-color="#d39e84"/><stop offset="1" stop-color="#95604c"/></linearGradient>
<linearGradient id="rwall" x1="0" y1="0" x2="0" y2="1"><stop offset="0" stop-color="#c2c2c2"/><stop offset="1" stop-color="#a9a9a9"/></linearGradient>
<linearGradient id="blind" x1="0" y1="0" x2="0" y2="1"><stop offset="0" stop-color="#b9bdc0"/><stop offset="1" stop-color="#a3a8ac"/></linearGradient>
<linearGradient id="hair" x1="0" y1="0" x2="0" y2="1"><stop offset="0" stop-color="#6e5a4a"/><stop offset="1" stop-color="#3e3029"/></linearGradient>
</defs>
<g clip-path="url(#cc)"><g style="filter:blur(0.9px)">
<rect x="-2" y="-2" width="174" height="174" fill="url(#wall)"/>
<rect x="35" y="4" width="16" height="62" fill="#d3d3d3"/>
<rect x="49" y="4" width="2" height="62" fill="#bdbdbd"/>
<rect x="134" y="62" width="40" height="90" fill="url(#rwall)"/>
<rect x="-2" y="64" width="133" height="9" fill="#232323"/>
<rect x="-2" y="73" width="133" height="16" fill="#d6d9db"/>
<rect x="-2" y="89" width="133" height="47" fill="url(#blind)"/>
<g fill="#959ba0"><rect x="96" y="90" width="1.5" height="45"/><rect x="102" y="90" width="1.5" height="45"/><rect x="108" y="90" width="1.5" height="45"/><rect x="114" y="90" width="1.5" height="45"/><rect x="120" y="90" width="1.5" height="45"/><rect x="126" y="90" width="1.5" height="45"/></g>
<rect x="103" y="110" width="4" height="18" fill="#7ea6d0"/><rect x="111" y="106" width="3" height="16" fill="#8fb4dc"/><rect x="117" y="114" width="3" height="12" fill="#86acd6"/>
<rect x="130" y="73" width="5" height="63" fill="#e2e2e2"/>
<ellipse cx="163" cy="97" rx="7" ry="6" fill="#3b4a2e"/>
<ellipse cx="159" cy="113" rx="8" ry="12" fill="#d3a58d"/>
<!-- neck -->
<path d="M46 112 L92 112 L94 134 L46 134 Z" fill="#bf8a70"/>
<!-- face -->
<path d="M34 62 C34 40 48 28 68 28 C90 28 101 42 101 62 L100 92 C98 112 88 131 69 133 C50 131 38 114 36 94 Z" fill="url(#face)"/>
<ellipse cx="99" cy="89" rx="5" ry="11" fill="#b07a64"/>
<!-- hair -->
<path d="M33 64 C31 36 46 20 70 20 C92 20 103 34 101 60 L100 80 C98 66 94 54 88 48 C74 44 54 46 42 52 C38 56 36 60 36 68 Z" fill="url(#hair)"/>
<path d="M44 36 C56 24 78 22 92 32 C78 28 60 30 46 40 Z" fill="#85705e"/>
<!-- brows/eyes -->
<path d="M41 72 Q48 68 56 71 M70 70 Q78 67 86 70" stroke="#8a6a58" stroke-width="2.2" fill="none"/>
<ellipse cx="50" cy="79.5" rx="5" ry="2.2" fill="#a7b1b8"/><ellipse cx="76" cy="79" rx="5.5" ry="2.2" fill="#a7b1b8"/>
<circle cx="50" cy="79.5" r="1.3" fill="#5a6a78"/><circle cx="76" cy="79" r="1.3" fill="#5a6a78"/>
<path d="M64 80 L61 98 Q64 101 70 99" stroke="#b0785f" stroke-width="1.6" fill="none"/>
<path d="M52 107 Q63 101 76 106 Q64 115 52 107 Z" fill="#8e5248"/><path d="M55 106 Q63 103 73 105.5 L72 108 Q63 106 56 108.5 Z" fill="#f2ebe6"/>
<!-- shirt -->
<path d="M-2 170 L-2 150 C6 144 14 139 21 137 C30 132 38 128 46 127 C54 133 62 134 69 131 C80 132 88 128 96 125 C108 128 118 131 127 135 C134 140 140 148 146 158 L152 172 Z" fill="#1b1b1c"/>
<!-- hand -->
<path d="M126 140 C130 134 140 133 147 137 C150 143 146 152 138 154 C131 154 125 148 126 140 Z" fill="#d6a188"/>
</g></g>
</svg>

</div></body></html>
